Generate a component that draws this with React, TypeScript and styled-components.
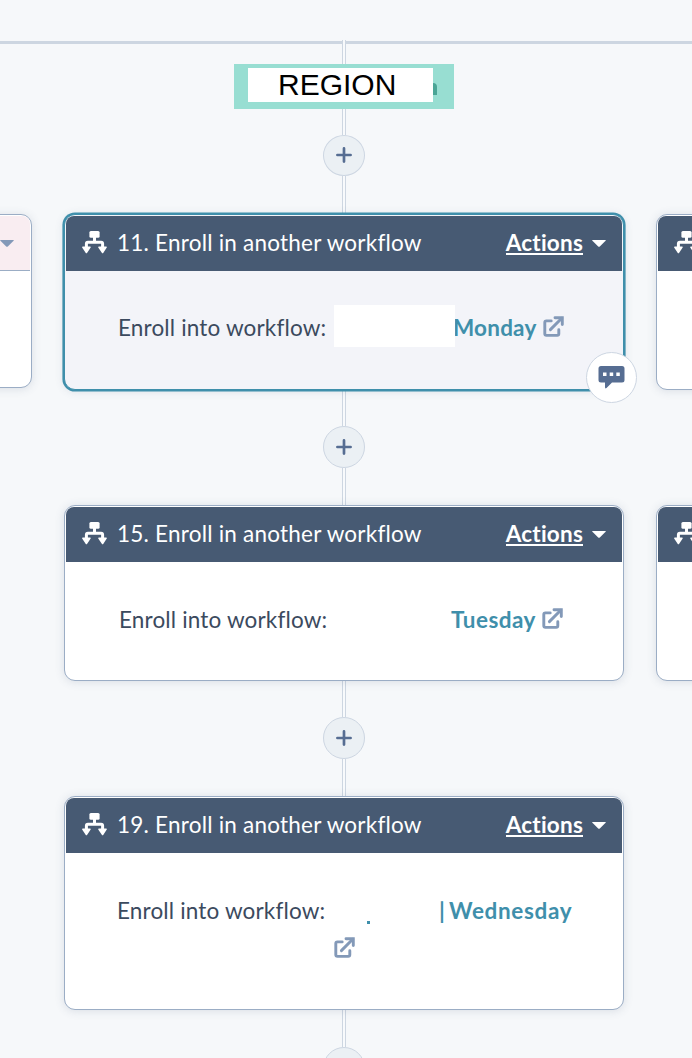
import React from "react";
import styled, { createGlobalStyle, css } from "styled-components";

const GlobalStyle = createGlobalStyle`
  * { box-sizing: border-box; }
  html, body { margin: 0; padding: 0; background: #f6f8fa; }
  body { font-family: Lato, "Liberation Sans", sans-serif; color: #3b4a5e; }
`;

const Canvas = styled.main`
  width: 692px;
  height: 1058px;
  overflow: hidden;
  background: #f6f8fa;
  padding-top: 41px;
`;

const BranchLine = styled.div`
  height: 3px;
  background: #cdd6e1;
`;

const Columns = styled.div`
  display: flex;
  gap: 32px;
  width: 1744px;
  margin: -4px 0 0 -528px;
`;

const Column = styled.section<{ $top?: number }>`
  display: flex;
  flex-direction: column;
  align-items: center;
  width: 560px;
  flex: none;
  padding-top: ${(p) => p.$top ?? 0}px;
`;

const Connector = styled.div<{ $length: number }>`
  width: 4px;
  height: ${(p) => p.$length}px;
  border: solid #cdd6e1;
  border-width: 0 1px;
  background: #f8fafc;
`;

const BranchLabel = styled.div`
  display: flex;
  align-items: center;
  width: 220px;
  height: 45px;
  padding: 0 0 3px 14px;
  background: #98ded2;
`;

const BranchName = styled.div`
  width: 185px;
  height: 34px;
  padding-left: 30px;
  background: #fff;
  color: #000;
  font: 30px/34px "Liberation Sans", Arial, sans-serif;
`;

const LabelRemnant = styled.span`
  width: 4px;
  height: 12px;
  margin-top: 8px;
  border-top-right-radius: 4px;
  background: #4aa596;
`;

const AddButton = styled.button<{ $height?: number }>`
  display: flex;
  align-items: center;
  justify-content: center;
  flex: none;
  width: 42px;
  height: ${(p) => p.$height ?? 42}px;
  padding: 0 0 ${(p) => (p.$height ? 1 : 0)}px;
  border: 1px solid #cdd6e2;
  border-radius: 50%;
  background: #ebf0f4;
`;

const Card = styled.article<{ $height: number; $selected?: boolean }>`
  position: relative;
  flex: none;
  width: 560px;
  height: ${(p) => p.$height}px;
  padding: 1px;
  border: 1px solid #9badc5;
  border-radius: 11px;
  background: #fff;
  box-shadow: 0 1px 10px rgba(70, 90, 120, 0.16);
  ${(p) =>
    p.$selected &&
    css`
      border-color: #3f8fab;
      background: #f3f4f9;
      box-shadow: 0 0 0 1.6px #3f8fab, 0 1px 10px rgba(70, 90, 120, 0.16);
    `}
`;

const CardHeader = styled.header<{ $alert?: boolean }>`
  display: flex;
  align-items: center;
  justify-content: ${(p) => (p.$alert ? "flex-end" : "flex-start")};
  height: 55px;
  padding: 0 16px ${(p) => (p.$alert ? 0 : 2)}px;
  border-radius: 8px 8px 0 0;
  background: ${(p) => (p.$alert ? "#f9edf1" : "#475a73")};
  border-bottom: ${(p) => (p.$alert ? "1px solid #9badc5" : "0")};
  color: #fff;
`;

const Title = styled.h2`
  flex: 1;
  margin: 0 0 0 10px;
  font-size: 22.5px;
  font-weight: 400;
  line-height: 30px;
  letter-spacing: 0.22px;
  white-space: nowrap;
`;

const ActionsLink = styled.span`
  margin-right: 9px;
  border-bottom: 2px solid #fff;
  font-size: 22.5px;
  font-weight: 700;
  line-height: 23px;
  height: 24px;
  letter-spacing: 0.22px;
`;

const CaretSvg = styled.svg`
  flex: none;
  margin-top: 1px;
`;

const CardBody = styled.div<{ $indent: number; $top?: number }>`
  padding: ${(p) => p.$top ?? 38}px 0 0 ${(p) => p.$indent}px;
  font-size: 22.5px;
  line-height: 38px;
`;

const Line = styled.div`
  display: flex;
  align-items: center;
  height: 38px;
  white-space: nowrap;
`;

const Caption = styled.span<{ $width: number }>`
  width: ${(p) => p.$width}px;
  flex: none;
  letter-spacing: 0.16px;
`;

const Redaction = styled.span`
  position: relative;
  z-index: 1;
  width: 121px;
  height: 42px;
  flex: none;
  margin-top: -5px;
  background: #fff;
`;

const WorkflowName = styled.a<{ $width: number; $pull?: number; $spacing?: number }>`
  width: ${(p) => p.$width}px;
  flex: none;
  margin-left: ${(p) => p.$pull ?? 0}px;
  color: #3f8fab;
  font-weight: 700;
  letter-spacing: ${(p) => p.$spacing ?? 0.2}px;
`;

const Divider = styled.span`
  width: 10px;
  flex: none;
  color: #3f8fab;
  font-weight: 700;
`;

const Dot = styled.i`
  width: 3px;
  height: 3px;
  flex: none;
  margin: 22px 69px 0 40px;
  background: #3f8fab;
`;

const IconLine = styled.div`
  display: flex;
  justify-content: center;
  padding-right: 50px;
  height: 38px;
  align-items: center;
`;

const CommentBadge = styled.button`
  position: absolute;
  right: -14px;
  bottom: -14px;
  display: flex;
  align-items: center;
  justify-content: center;
  width: 51px;
  height: 51px;
  padding: 0 1px 0 0;
  border: 1px solid #cdd6e2;
  border-radius: 50%;
  background: #fff;
`;

const ExternalSvg = styled.svg`
  flex: none;
  display: block;
  margin-top: -4px;
`;

const WorkflowSvg = styled.svg`
  flex: none;
  display: block;
`;

const PlusIcon = () => (
  <svg width="16" height="16" viewBox="0 0 16 16" stroke="#566d92" strokeWidth="2.7" strokeLinecap="round">
    <path d="M8 1.4V14.6M1.4 8H14.6" />
  </svg>
);

const WorkflowIcon = () => (
  <WorkflowSvg width="25" height="23" viewBox="0 0 25 23" fill="#fff">
    <rect x="7.4" y="0" width="10.2" height="6.8" rx="1.5" />
    <path d="M12.5 6V11.2M4.4 16.5V12.7Q4.4 11.2 5.9 11.2H19.1Q20.6 11.2 20.6 12.7V16.5" fill="none" stroke="#fff" strokeWidth="3" />
    <path d="M0.8 15.6H8.1Q9.2 15.8 8.5 16.8L5.2 21.8Q4.4 22.8 3.6 21.8L0.3 16.8Q-0.3 15.8 .8 15.6ZM16.9 15.6H24.2Q25.3 15.8 24.6 16.8L21.4 21.8Q20.6 22.8 19.8 21.8L16.4 16.8Q15.8 15.8 16.9 15.6Z" />
  </WorkflowSvg>
);

const Caret = ({ color = "#fff" }: { color?: string }) => (
  <CaretSvg width="14" height="7" viewBox="0 0 14 7">
    <path d="M0.6 0H13.4Q14.2 0.2 13.6 0.8L7.8 6.5Q7 7.2 6.2 6.5L0.4 0.8Q-.2 .2 .6 0Z" fill={color} />
  </CaretSvg>
);

const ExternalIcon = () => (
  <ExternalSvg width="21" height="21" viewBox="0 0 21 21" fill="none" stroke="#8399b8" strokeWidth="2.9">
    <path d="M8.2 4.9H3.4Q1.8 4.9 1.8 6.5V17.8Q1.8 19.4 3.4 19.4H14.2Q15.8 19.4 15.8 17.8V13.8" strokeLinecap="round" />
    <path d="M12 1.7H19.3V8.6" strokeLinecap="round" />
    <path d="M7.4 13.6L18.7 2.3" strokeLinecap="round" />
  </ExternalSvg>
);

const CommentIcon = () => (
  <svg width="27" height="23" viewBox="0 0 27 23">
    <path d="M3 0H24Q26.5 0 26.5 2.5V14Q26.5 16.5 24 16.5H14L8.5 22Q7 23.2 7 21V16.5H3Q.5 16.5 .5 14V2.5Q.5 0 3 0Z" fill="#566d92" />
    <path d="M5 6.5H8.5V10H5ZM11.7 6.5H15.2V10H11.7ZM18.3 6.5H21.8V10H18.3Z" fill="#fff" />
  </svg>
);

const Header = ({ title }: { title: string }) => (
  <CardHeader>
    <WorkflowIcon />
    <Title>{title}</Title>
    <ActionsLink>Actions</ActionsLink>
    <Caret />
  </CardHeader>
);

const ClippedHeader = () => (
  <CardHeader>
    <WorkflowIcon />
  </CardHeader>
);

export default function App() {
  return (
    <>
      <GlobalStyle />
      <Canvas>
        <BranchLine />
        <Columns>
          <Column $top={174}>
            <Card $height={174}>
              <CardHeader $alert>
                <Caret color="#8399b8" />
              </CardHeader>
            </Card>
          </Column>

          <Column>
            <Connector $length={24} />
            <BranchLabel>
              <BranchName>REGION</BranchName>
              <LabelRemnant />
            </BranchLabel>
            <Connector $length={26} />
            <AddButton $height={41}><PlusIcon /></AddButton>
            <Connector $length={38} />
            <Card $height={176} $selected>
              <Header title="11. Enroll in another workflow" />
              <CardBody $indent={52}>
                <Line>
                  <Caption $width={216}>Enroll into workflow:</Caption>
                  <Redaction />
                  <WorkflowName $width={90} $pull={-2}>Monday</WorkflowName>
                  <ExternalIcon />
                </Line>
              </CardBody>
              <CommentBadge><CommentIcon /></CommentBadge>
            </Card>
            <Connector $length={36} />
            <AddButton><PlusIcon /></AddButton>
            <Connector $length={37} />
            <Card $height={176}>
              <Header title="15. Enroll in another workflow" />
              <CardBody $indent={53} $top={39}>
                <Line>
                  <Caption $width={332}>Enroll into workflow:</Caption>
                  <WorkflowName $width={91} $spacing={0.45}>Tuesday</WorkflowName>
                  <ExternalIcon />
                </Line>
              </CardBody>
            </Card>
            <Connector $length={36} />
            <AddButton><PlusIcon /></AddButton>
            <Connector $length={37} />
            <Card $height={214}>
              <Header title="19. Enroll in another workflow" />
              <CardBody $indent={51} $top={39}>
                <Line>
                  <Caption $width={210}>Enroll into workflow:</Caption>
                  <Dot />
                  <Divider>|</Divider>
                  <WorkflowName $width={130} $spacing={0.65}>Wednesday</WorkflowName>
                </Line>
                <IconLine><ExternalIcon /></IconLine>
              </CardBody>
            </Card>
            <Connector $length={37} />
            <AddButton><PlusIcon /></AddButton>
          </Column>

          <Column $top={174}>
            <Card $height={176}>
              <ClippedHeader />
            </Card>
            <Connector $length={115} />
            <Card $height={176}>
              <ClippedHeader />
            </Card>
          </Column>
        </Columns>
      </Canvas>
    </>
  );
}
